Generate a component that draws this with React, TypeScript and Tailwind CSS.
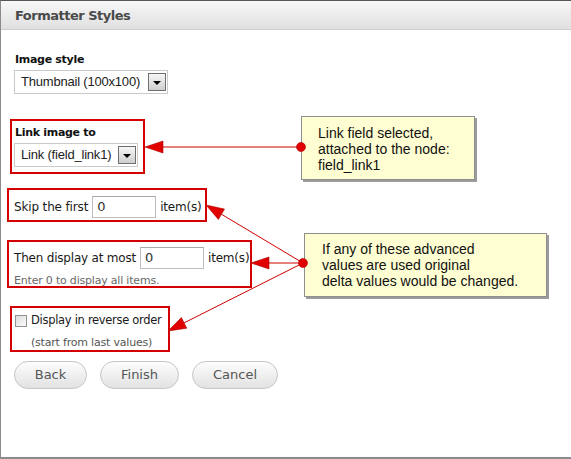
import React from "react";

type Pt = [number, number];

function Arrow({ s, t, len = 18, hw = 6 }: { s: Pt; t: Pt; len?: number; hw?: number }) {
  const dx = t[0] - s[0];
  const dy = t[1] - s[1];
  const d = Math.hypot(dx, dy);
  const ux = dx / d;
  const uy = dy / d;
  const bx = t[0] - ux * len;
  const by = t[1] - uy * len;
  const nx = -uy;
  const ny = ux;
  const p1 = `${t[0]},${t[1]}`;
  const p2 = `${bx + nx * hw},${by + ny * hw}`;
  const p3 = `${bx - nx * hw},${by - ny * hw}`;
  return (
    <g>
      <line x1={s[0]} y1={s[1]} x2={bx} y2={by} stroke="#d00000" strokeWidth={1} />
      <polygon points={`${p1} ${p2} ${p3}`} fill="#e00000" stroke="#b00000" strokeWidth={0.6} />
    </g>
  );
}

function DropBtn() {
  return (
    <div className="w-[18px] h-[18px] border border-[#6e6e6e] bg-gradient-to-b from-[#f6f6f6] to-[#cfcfcf] flex items-center justify-center">
      <div className="w-0 h-0 border-l-[4px] border-r-[4px] border-t-[4px] border-l-transparent border-r-transparent border-t-black mt-[1px]" />
    </div>
  );
}

function Select({ label, w }: { label: string; w: string }) {
  return (
    <div className={`${w} h-[24px] border border-[#c9c9c9] bg-white flex items-center justify-between pl-[6px] pr-[1px]`}>
      <span className="font-['Liberation_Sans',sans-serif] text-[13px] tracking-[-0.2px] text-[#222] whitespace-nowrap">{label}</span>
      <DropBtn />
    </div>
  );
}

function Input() {
  return (
    <div className="w-[64px] h-[22px] border border-[#bdbdbd] border-t-[#a9a9a9] bg-white flex items-center pl-[4px] text-[13px] text-[#333]">
      0
    </div>
  );
}

function Btn({ label, w }: { label: string; w: string }) {
  return (
    <div className={`${w} h-[28px] rounded-full border border-[#c6c6c6] bg-gradient-to-b from-[#fdfdfd] to-[#e2e2e2] flex items-center justify-center text-[13px] text-[#555]`}>
      {label}
    </div>
  );
}

export default function App() {
  return (
    <div className="relative w-[571px] h-[459px] bg-white overflow-hidden border-l border-l-[#8a8a8a] border-t border-t-[#555] border-b-2 border-b-[#8c8c8c] font-['DejaVu_Sans',sans-serif] text-[#1a1a1a]">
      {/* Header */}
      <div className="h-[29px] border-b border-[#cfcfcf] bg-gradient-to-b from-[#f7f7f7] to-[#e0e0e0] flex items-center pl-[14px]">
        <span className="font-bold text-[13px] tracking-[-0.5px] text-[#4a4a4a] mt-[1px]">Formatter Styles</span>
      </div>

      {/* Body */}
      <div className="flex flex-col items-start">
        <div className="mt-[23px] ml-[14px] h-[14px] leading-[14px] font-bold text-[11px] tracking-[-0.3px] text-[#111]">
          Image style
        </div>
        <div className="mt-[3px] ml-[13px]">
          <Select label="Thumbnail (100x100)" w="w-[154px]" />
        </div>

        {/* Box 1 */}
        <div className="mt-[25px] ml-[9px] w-[135px] h-[55px] border-2 border-[#d40000] pt-[5px]">
          <div className="h-[14px] leading-[14px] pl-[3px] font-bold text-[11px] tracking-[-0.3px] text-[#111]">
            Link image to
          </div>
          <div className="mt-[3px] ml-[2px]">
            <Select label="Link (field_link1)" w="w-[124px]" />
          </div>
        </div>

        {/* Box 2 */}
        <div className="mt-[14px] ml-[6px] w-[200px] h-[34px] border-2 border-[#d40000] pt-[6px] pl-[5px]">
          <div className="flex items-center h-[22px] text-[12px] tracking-[-0.15px] whitespace-nowrap">
            <span>Skip the first</span>
            <div className="ml-[4px]"><Input /></div>
            <span className="ml-[4px] tracking-[-0.2px]">item(s)</span>
          </div>
        </div>

        {/* Box 3 */}
        <div className="mt-[18px] ml-[6px] w-[245px] h-[48px] border-2 border-[#d40000] pt-[5px] pl-[5px]">
          <div className="flex items-center h-[22px] text-[12px] tracking-[-0.2px] whitespace-nowrap">
            <span>Then display at most</span>
            <div className="ml-[4px]"><Input /></div>
            <span className="ml-[4px]">item(s)</span>
          </div>
          <div className="mt-[5px] h-[13px] leading-[13px] text-[11px] tracking-[-0.2px] text-[#6a6a6a] whitespace-nowrap">
            Enter 0 to display all items.
          </div>
        </div>

        {/* Box 4 */}
        <div className="mt-[18px] ml-[9px] w-[160px] h-[46px] border-2 border-[#d40000] pt-[5px] pl-[3px]">
          <div className="flex items-center h-[16px] whitespace-nowrap">
            <div className="w-[12px] h-[12px] border border-[#929292] bg-gradient-to-br from-[#dcdcdc] to-[#fbfbfb]" />
            <span className="ml-[4px] text-[11.5px] tracking-[-0.3px] text-[#1a1a1a]">Display in reverse order</span>
          </div>
          <div className="mt-[7px] pl-[16px] h-[13px] leading-[13px] text-[11px] tracking-[-0.2px] text-[#555] whitespace-nowrap">
            (start from last values)
          </div>
        </div>

        {/* Buttons */}
        <div className="mt-[9px] ml-[13px] flex gap-[13px]">
          <Btn label="Back" w="w-[73px]" />
          <Btn label="Finish" w="w-[79px]" />
          <Btn label="Cancel" w="w-[86px]" />
        </div>
      </div>

      {/* Notes */}
      <div className="absolute left-[300px] top-[115px] w-[174px] h-[64px] bg-[#fffed2] border border-[#8e8e8e] shadow-[2px_2px_0_#9c9c9c] pl-[16px] pt-[8px] font-['Liberation_Sans',sans-serif] text-[14px] leading-[16px] text-[#111]">
        Link field selected,
        <br />
        attached to the node:
        <br />
        field_link1
      </div>
      <div className="absolute left-[303px] top-[232px] w-[243px] h-[64px] bg-[#fffed2] border border-[#8e8e8e] shadow-[2px_2px_0_#9c9c9c] pl-[17px] pt-[7px] font-['Liberation_Sans',sans-serif] text-[14px] leading-[16px] text-[#111] whitespace-nowrap">
        If any of these advanced
        <br />
        values are used original
        <br />
        delta values would be changed.
      </div>

      {/* Arrows */}
      <svg className="absolute left-[-1px] top-[-1px] pointer-events-none" width={571} height={459} viewBox="0 0 571 459">
        <Arrow s={[301, 147]} t={[145, 147]} />
        <Arrow s={[303, 263]} t={[206, 205]} />
        <Arrow s={[303, 263]} t={[251, 263]} />
        <Arrow s={[303, 263]} t={[168, 331]} />
        <circle cx={301} cy={147} r={4.5} fill="#e00000" stroke="#b00000" strokeWidth={0.6} />
        <circle cx={303} cy={263} r={4.5} fill="#e00000" stroke="#b00000" strokeWidth={0.6} />
      </svg>
    </div>
  );
}
